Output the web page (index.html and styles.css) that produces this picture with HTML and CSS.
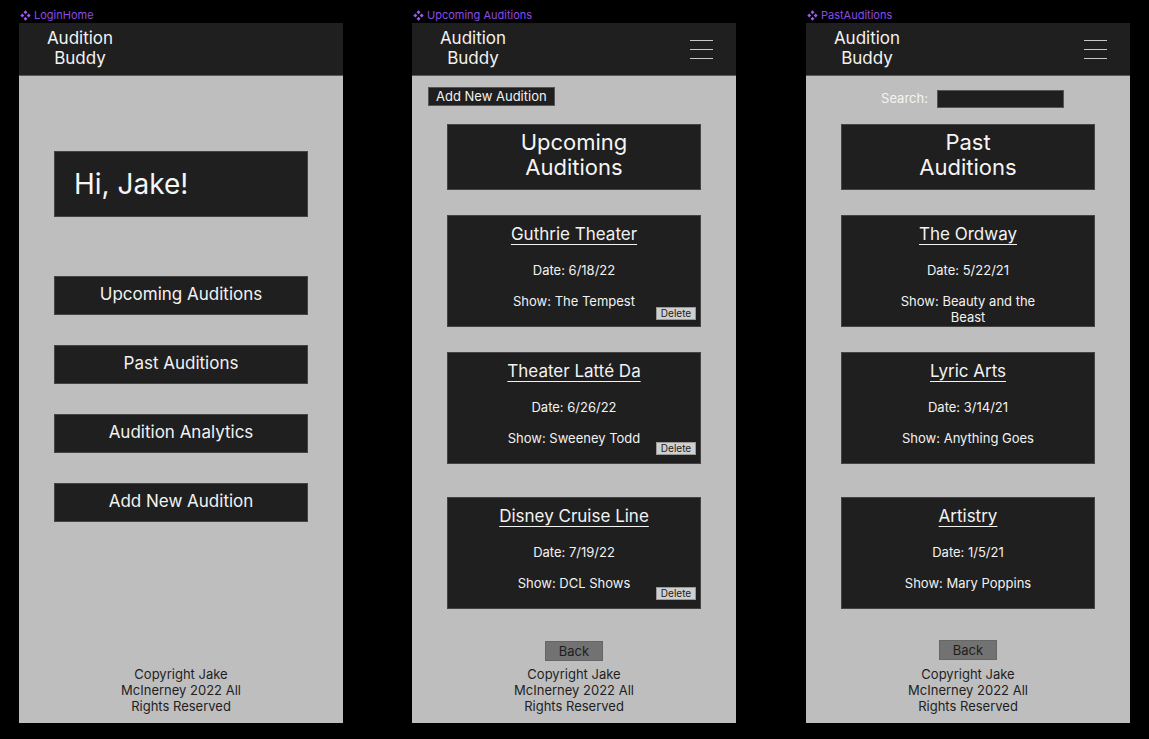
FILE: index.html
```html
<!DOCTYPE html>
<html>
<head>
<meta charset="utf-8">
<link rel="stylesheet" href="styles.css">
</head>
<body>
<div class="canvas">

  <section class="col">
    <div class="label"><svg class="comp" viewBox="0 0 10 10"><path d="M5 0.3L6.8 2.1 5 3.9 3.2 2.1Z M5 6.1L6.8 7.9 5 9.7 3.2 7.9Z M2.1 3.2L3.9 5 2.1 6.8 0.3 5Z M7.9 3.2L9.7 5 7.9 6.8 6.1 5Z"/></svg>LoginHome</div>
    <div class="frame">
      <header class="bar">
        <div class="brand">Audition<br>Buddy</div>
      </header>
      <main class="body home">
        <div class="hello">Hi, Jake!</div>
        <div class="navbtn first">Upcoming Auditions</div>
        <div class="navbtn">Past Auditions</div>
        <div class="navbtn">Audition Analytics</div>
        <div class="navbtn">Add New Audition</div>
        <footer class="foot">Copyright Jake McInerney 2022 All Rights Reserved</footer>
      </main>
    </div>
  </section>

  <section class="col">
    <div class="label"><svg class="comp" viewBox="0 0 10 10"><path d="M5 0.3L6.8 2.1 5 3.9 3.2 2.1Z M5 6.1L6.8 7.9 5 9.7 3.2 7.9Z M2.1 3.2L3.9 5 2.1 6.8 0.3 5Z M7.9 3.2L9.7 5 7.9 6.8 6.1 5Z"/></svg>Upcoming Auditions</div>
    <div class="frame">
      <header class="bar">
        <div class="brand">Audition<br>Buddy</div>
        <div class="burger"><span></span><span></span><span></span></div>
      </header>
      <main class="body list">
        <div class="addbtn">Add New Audition</div>
        <div class="title">Upcoming<br>Auditions</div>
        <div class="card">
          <div class="ctitle">Guthrie Theater</div>
          <div class="cdate">Date: 6/18/22</div>
          <div class="cshow">Show: The Tempest</div>
          <div class="del d1">Delete</div>
        </div>
        <div class="card">
          <div class="ctitle">Theater Latté Da</div>
          <div class="cdate">Date: 6/26/22</div>
          <div class="cshow">Show: Sweeney Todd</div>
          <div class="del">Delete</div>
        </div>
        <div class="card third">
          <div class="ctitle">Disney Cruise Line</div>
          <div class="cdate">Date: 7/19/22</div>
          <div class="cshow">Show: DCL Shows</div>
          <div class="del">Delete</div>
        </div>
        <div class="back">Back</div>
        <footer class="foot">Copyright Jake McInerney 2022 All Rights Reserved</footer>
      </main>
    </div>
  </section>

  <section class="col last">
    <div class="label"><svg class="comp" viewBox="0 0 10 10"><path d="M5 0.3L6.8 2.1 5 3.9 3.2 2.1Z M5 6.1L6.8 7.9 5 9.7 3.2 7.9Z M2.1 3.2L3.9 5 2.1 6.8 0.3 5Z M7.9 3.2L9.7 5 7.9 6.8 6.1 5Z"/></svg>PastAuditions</div>
    <div class="frame">
      <header class="bar">
        <div class="brand">Audition<br>Buddy</div>
        <div class="burger"><span></span><span></span><span></span></div>
      </header>
      <main class="body list">
        <div class="search"><span class="slabel">Search:</span><span class="sinput"></span></div>
        <div class="title t3">Past<br>Auditions</div>
        <div class="card">
          <div class="ctitle">The Ordway</div>
          <div class="cdate">Date: 5/22/21</div>
          <div class="cshow narrow">Show: Beauty and the Beast</div>
        </div>
        <div class="card">
          <div class="ctitle">Lyric Arts</div>
          <div class="cdate">Date: 3/14/21</div>
          <div class="cshow">Show: Anything Goes</div>
        </div>
        <div class="card third">
          <div class="ctitle">Artistry</div>
          <div class="cdate">Date: 1/5/21</div>
          <div class="cshow">Show: Mary Poppins</div>
        </div>
        <div class="back b3">Back</div>
        <footer class="foot">Copyright Jake McInerney 2022 All Rights Reserved</footer>
      </main>
    </div>
  </section>

</div>
</body>
</html>
```

FILE: styles.css
```css
html, body {
  margin: 0;
  padding: 0;
  background: #000;
  font-family: Inter, "Noto Sans", "Liberation Sans", sans-serif;
}

.canvas {
  display: flex;
  gap: 69px;
  padding-left: 19px;
  width: 1149px;
  height: 739px;
  box-sizing: border-box;
  overflow: hidden;
}

.col {
  display: flex;
  flex-direction: column;
  width: 324px;
}

.col.last {
  margin-left: 1px;
}

.label {
  height: 23px;
  box-sizing: border-box;
  padding-top: 8px;
  padding-left: 1px;
  font-size: 11px;
  line-height: 15px;
  color: #8b4be6;
  display: flex;
  align-items: flex-start;
}

.comp {
  width: 11px;
  height: 11px;
  margin-top: 2px;
  margin-right: 3px;
  fill: #9a5cf0;
}

.frame {
  width: 324px;
  height: 700px;
  display: flex;
  flex-direction: column;
  background: #bebebe;
}

.bar {
  height: 53px;
  background: #1f1f1f;
  border-bottom: 1px solid #5a5a5a;
  box-sizing: border-box;
  display: flex;
  justify-content: space-between;
  align-items: flex-start;
  padding: 5px 23px 0 11px;
}

.brand {
  width: 100px;
  text-align: center;
  color: #f2f2f2;
  font-size: 17px;
  line-height: 20px;
}

.burger {
  width: 23px;
  margin-top: 12px;
  display: flex;
  flex-direction: column;
  gap: 8px;
}

.burger span {
  display: block;
  height: 1px;
  background: #c8c8c8;
}

.body {
  flex: 1;
  display: flex;
  flex-direction: column;
  align-items: center;
  box-sizing: border-box;
  padding-bottom: 9px;
}

.home {
  padding-top: 75px;
}

.hello {
  width: 254px;
  height: 66px;
  box-sizing: border-box;
  background: #1f1f1f;
  color: #f5f5f5;
  font-size: 28px;
  line-height: 64px;
  padding-left: 19px;
  border: 1px solid #444;
}

.navbtn {
  width: 254px;
  height: 39px;
  box-sizing: border-box;
  background: #1f1f1f;
  border: 1px solid #444;
  color: #f2f2f2;
  font-size: 17px;
  line-height: 35px;
  text-align: center;
  margin-top: 30px;
}

.navbtn.first {
  margin-top: 59px;
}

.foot {
  margin-top: auto;
  width: 140px;
  text-align: center;
  font-size: 13px;
  line-height: 16px;
  color: #1e1e1e;
}

.list {
  padding-top: 11px;
}

.addbtn {
  align-self: flex-start;
  margin-left: 16px;
  height: 19px;
  box-sizing: border-box;
  padding: 0 7px;
  background: #1f1f1f;
  border: 1px solid #555;
  color: #f2f2f2;
  font-size: 13px;
  line-height: 16px;
}

.search {
  display: flex;
  align-items: center;
  gap: 9px;
  margin-left: 9px;
  margin-top: 3px;
  height: 18px;
}

.slabel {
  color: #f4f4f4;
  font-size: 13px;
  line-height: 16px;
  margin-top: -2px;
}

.sinput {
  width: 127px;
  height: 18px;
  box-sizing: border-box;
  background: #1f1f1f;
  border: 1px solid #555;
}

.title {
  margin-top: 18px;
  width: 254px;
  height: 66px;
  box-sizing: border-box;
  background: #1f1f1f;
  border: 1px solid #444;
  color: #f5f5f5;
  font-size: 22px;
  line-height: 25px;
  text-align: center;
  display: flex;
  align-items: center;
  justify-content: center;
  padding-bottom: 5px;
}

.title.t3 {
  margin-top: 16px;
}

.card {
  position: relative;
  margin-top: 25px;
  width: 254px;
  height: 112px;
  box-sizing: border-box;
  background: #1f1f1f;
  border: 1px solid #444;
  color: #f2f2f2;
  text-align: center;
  padding-top: 8px;
  display: flex;
  flex-direction: column;
  align-items: center;
}

.card.third {
  margin-top: 33px;
}

.ctitle {
  font-size: 17px;
  line-height: 20px;
  text-decoration: underline;
  text-underline-offset: 4px;
  text-decoration-thickness: 1px;
}

.cdate {
  margin-top: 18px;
  font-size: 13px;
  line-height: 16px;
}

.cshow {
  margin-top: 15px;
  font-size: 13px;
  line-height: 16px;
}

.cshow.narrow {
  width: 150px;
}

.del {
  position: absolute;
  right: 4px;
  bottom: 8px;
  width: 40px;
  height: 13px;
  background: #cfcfcf;
  color: #222;
  font-size: 10px;
  line-height: 11px;
  text-align: center;
  border: 1px solid #999;
  box-sizing: border-box;
}

.del.d1 {
  bottom: 6px;
}

.back {
  margin-top: auto;
  margin-bottom: 5px;
  width: 58px;
  height: 20px;
  box-sizing: border-box;
  background: #727272;
  border: 1px solid #666;
  color: #1e1e1e;
  font-size: 13px;
  line-height: 18px;
  text-align: center;
}

.back.b3 {
  margin-bottom: 6px;
}

.back + .foot {
  margin-top: 0;
}
```
